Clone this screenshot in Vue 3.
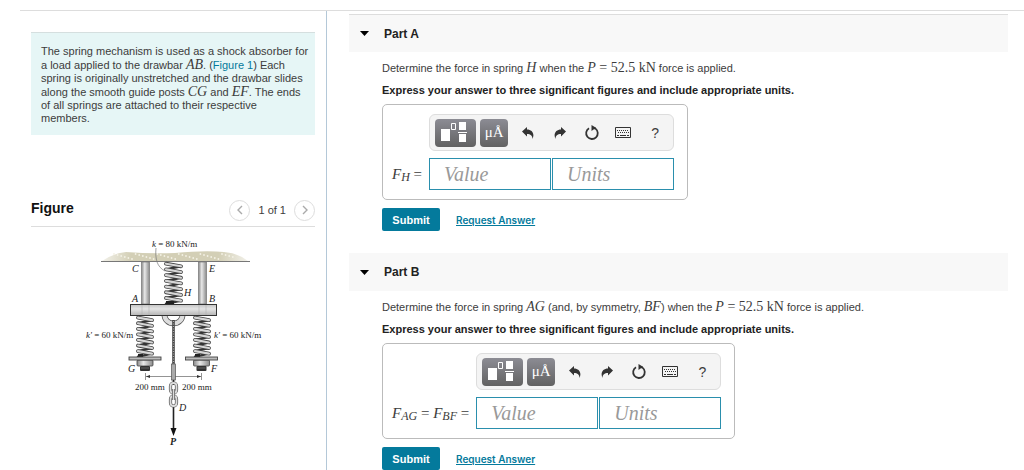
<script setup>
import { ref } from "vue";

// Text pieces of each question, "m" is a math variable and "n" a math number
const parts = ref([
  {
    id: "a",
    title: "Part A",
    open: true,
    text: [
      { text: "Determine the force in spring " },
      { kind: "m", text: "H" },
      { text: " when the " },
      { kind: "m", text: "P" },
      { kind: "n", text: " = 52.5 kN" },
      { text: " force is applied." },
    ],
    forces: ["H"],
  },
  {
    id: "b",
    title: "Part B",
    open: true,
    text: [
      { text: "Determine the force in spring " },
      { kind: "m", text: "AG" },
      { text: " (and, by symmetry, " },
      { kind: "m", text: "BF" },
      { text: ") when the " },
      { kind: "m", text: "P" },
      { kind: "n", text: " = 52.5 kN" },
      { text: " force is applied." },
    ],
    forces: ["AG", "BF"],
  },
]);

// Build the front and back strands of a spring
const makeSpring = (left, right, top, bottom, coils) => {
  const step = (bottom - top) / coils;
  let front = "";
  let back = "";
  for (let i = 0; i < coils; i++) {
    const y = top + i * step;
    front += `M${left} ${y + step * 0.3}L${right} ${y + step * 0.75}`;
    back += `M${right} ${y + step * 0.75}L${left} ${y + step * 1.3}`;
  }
  return { front, back };
};

const springs = [
  makeSpring(86, 101, 27, 67, 7),
  makeSpring(58, 72, 81, 120, 7),
  makeSpring(115, 129, 81, 120, 7),
];

// Small stones in the ceiling
const stones = Array.from({ length: 34 }, (_, i) => ({
  x: 34 + i * 3.6,
  y: 19 + ((i * 7) % 6),
}));
</script>

<template>
  <div class="page">
    <aside class="sidebar">
      <p class="problem">
        The spring mechanism is used as a shock absorber for a load applied to
        the drawbar <i class="math">AB</i>. (<a href="#figure">Figure 1</a>)
        Each spring is originally unstretched and the drawbar slides along the
        smooth guide posts <i class="math">CG</i> and
        <i class="math">EF</i>. The ends of all springs are attached to their
        respective <br />members.
      </p>

      <div class="figure-header">
        <h2>Figure</h2>
        <div class="pager">
          <button type="button" aria-label="Previous figure">
            <svg width="8" height="10" viewBox="0 0 8 10"><path d="M6 1L2 5l4 4" /></svg>
          </button>
          <span>1 of 1</span>
          <button type="button" aria-label="Next figure">
            <svg width="8" height="10" viewBox="0 0 8 10"><path d="M2 1l4 4-4 4" /></svg>
          </button>
        </div>
      </div>

      <svg id="figure" class="figure" width="190" height="215" viewBox="0 0 190 215">
        <defs>
          <linearGradient id="post">
            <stop offset="0" stop-color="#888" />
            <stop offset="0.4" stop-color="#e8e8e8" />
            <stop offset="1" stop-color="#8a8a8a" />
          </linearGradient>
          <linearGradient id="bar" x2="0" y2="1">
            <stop offset="0" stop-color="#c4c4c4" />
            <stop offset="0.4" stop-color="#e4e4e4" />
            <stop offset="1" stop-color="#b4b4b4" />
          </linearGradient>
          <linearGradient id="ceiling">
            <stop offset="0" stop-color="#d3cfb6" stop-opacity="0.3" />
            <stop offset="0.2" stop-color="#d3cfb6" />
            <stop offset="0.8" stop-color="#d3cfb6" />
            <stop offset="1" stop-color="#d3cfb6" stop-opacity="0.3" />
          </linearGradient>
        </defs>

        <!-- ceiling -->
        <path d="M22 26Q34 18 46 17Q70 19 95 18Q125 15 144 17Q158 18 168 26Z" fill="url(#ceiling)" />
        <circle v-for="s in stones" :key="s.x" :cx="s.x" :cy="s.y" r="0.9" fill="#f3f1e4" />
        <path d="M21 26.5H170" stroke="#777" />

        <!-- guide posts -->
        <rect x="61.5" y="27" width="8" height="42" fill="url(#post)" stroke="#777" stroke-width="0.7" />
        <rect x="118.5" y="27" width="8" height="42" fill="url(#post)" stroke="#777" stroke-width="0.7" />

        <!-- springs -->
        <g v-for="(spring, i) in springs" :key="i" stroke-linecap="round" fill="none">
          <path :d="spring.back" stroke="#333" stroke-width="2.4" />
          <path :d="spring.front" stroke="#444" stroke-width="3.8" />
          <path :d="spring.front" stroke="#d6d6d6" stroke-width="2.2" />
        </g>
        <path d="M86 67.5h8M58 120.500h5M115 120.500h5" stroke="#222" stroke-width="3" />

        <!-- eye and drawbar -->
        <path d="M84.5 80a9 8.5 0 0 0 18 0" fill="none" stroke="#555" stroke-width="5.8" />
        <path d="M84.5 80a9 8.5 0 0 0 18 0" fill="none" stroke="#ddd" stroke-width="4.2" />
        <rect x="50.5" y="69.5" width="86" height="11" fill="url(#bar)" stroke="#333" />
        <path d="M62 70v10M69 70v10M119 70v10M126 70v10" stroke="#aaa" stroke-width="0.5" />

        <!-- plates and nuts -->
        <g v-for="x in [65, 121.5]" :key="x">
          <rect :x="x - 8" y="125" width="16" height="6" rx="1" fill="url(#post)" stroke="#444" stroke-width="0.8" />
          <rect :x="x - 5" y="131" width="10" height="5" rx="1" fill="#333" />
          <path :d="`M${x - 4} 133h8`" stroke="#888" stroke-width="0.6" />
          <rect :x="x - 16" y="122" width="32" height="3" fill="#bbb" stroke="#444" stroke-width="0.9" />
        </g>

        <!-- dimension line -->
        <path d="M65.5 138v7M121.5 138v7M66 141.5H121" stroke="#666" stroke-width="0.7" />
        <path d="M66 141.5l4-1.5v3zM121 141.5l-4-1.5v3z" fill="#333" />

        <!-- rope and chain -->
        <path d="M93.5 85V130" stroke="#444" stroke-width="2.6" />
        <path d="M93.5 86V130" stroke="#aaa" stroke-width="1.2" stroke-dasharray="1 1.5" />
        <rect x="91.5" y="129" width="4" height="16" fill="#aaa" stroke="#555" stroke-width="0.7" />
        <path d="M93.5 145v5M93.5 171v23" stroke="#222" stroke-width="1.6" />
        <g fill="none">
          <g stroke="#555" stroke-width="3.2">
            <rect x="90.5" y="148" width="6" height="10" rx="3" />
            <rect x="90.5" y="161" width="6" height="10" rx="3" />
          </g>
          <g stroke="#ddd" stroke-width="1.8">
            <rect x="90.5" y="148" width="6" height="10" rx="3" />
            <rect x="90.5" y="161" width="6" height="10" rx="3" />
          </g>
          <path d="M93.5 154v11" stroke="#555" stroke-width="3" />
          <path d="M93.5 154v11" stroke="#ddd" stroke-width="1.6" />
        </g>
        <path d="M93.5 201l-3-8h6z" fill="#111" />

        <!-- labels -->
        <path d="M76 13C75 24 77 32 85 36" fill="none" stroke="#777" stroke-width="0.7" />
        <g class="labels">
          <text x="72" y="12"><tspan class="it">k</tspan> = 80 kN/m</text>
          <text x="6" y="103"><tspan class="it">k'</tspan> = 60 kN/m</text>
          <text x="134" y="103"><tspan class="it">k'</tspan> = 60 kN/m</text>
          <text x="55" y="155">200 mm</text>
          <text x="102" y="155">200 mm</text>
        </g>
        <g class="points">
          <text x="52" y="37">C</text>
          <text x="129" y="37">E</text>
          <text x="52" y="67">A</text>
          <text x="129" y="67">B</text>
          <text x="104" y="61">H</text>
          <text x="48" y="137">G</text>
          <text x="131" y="137">F</text>
          <text x="99" y="176">D</text>
          <text x="90" y="210" class="bold">P</text>
        </g>
      </svg>
    </aside>

    <main class="content">
      <section v-for="part in parts" :key="part.id" class="part">
        <h2 class="part-header">
          <button type="button" :aria-expanded="part.open" @click="part.open = !part.open">
            <svg width="9" height="5" viewBox="0 0 9 5"><path d="M0 0h9L4.5 5z" /></svg>
            {{ part.title }}
          </button>
        </h2>

        <div v-if="part.open" class="part-body">
          <p>
            <span v-for="(piece, i) in part.text" :key="i" :class="piece.kind && ['math', piece.kind]">{{ piece.text }}</span>
          </p>
          <p class="hint">
            Express your answer to three significant figures and include
            appropriate units.
          </p>

          <div class="answer">
            <div class="toolbar">
              <button type="button" class="dark template" aria-label="Templates">
                <svg width="41" height="28" viewBox="0 0 41 28" fill="#fff">
                  <path d="M6 10h9v12H6zM24 3h7v8h-7zM23 13h9v1h-9zM24 15h7v8h-7z" />
                  <path d="M16.5 4.5h4v6h-4z" fill="none" stroke="#fff" />
                </svg>
              </button>
              <button type="button" class="dark symbols" aria-label="Symbols">μÅ</button>
              <div class="tools">
                <button type="button" aria-label="Undo">
                  <svg width="12" height="12" viewBox="0 0 12 12" fill="#333">
                    <path d="M0 4.5L5 0v2.5C10 2.5 13 6.5 10.5 12C10.5 8.5 8.5 7 5 7V9.5z" />
                  </svg>
                </button>
                <button type="button" aria-label="Redo">
                  <svg width="12" height="12" viewBox="0 0 12 12" fill="#333">
                    <path d="M12 4.5L7 0v2.5C2 2.5-1 6.5 1.5 12C1.5 8.5 3.5 7 7 7V9.5z" />
                  </svg>
                </button>
                <button type="button" aria-label="Reset">
                  <svg width="16" height="16" viewBox="0 0 16 16">
                    <path d="M5 3.2A5.8 5.8 0 1 0 11.500 3.600L9 2.800" fill="none" stroke="#333" stroke-width="1.8" />
                    <path d="M7.500 0l4.500 2.800L7.500 6z" fill="#333" />
                  </svg>
                </button>
                <button type="button" aria-label="Keyboard">
                  <svg width="16" height="11" viewBox="0 0 16 11" fill="none" stroke="#333">
                    <path d="M0.5 0.5h15v10h-15z" />
                    <path d="M2 3.5h12M3 5.5h11" stroke-dasharray="1 1" />
                    <path d="M2 8.5h2M5 8.5h6M12 8.5h2" />
                  </svg>
                </button>
                <button type="button" class="help" aria-label="Help">?</button>
              </div>
            </div>
            <label :for="`value-${part.id}`" class="force">
              <span v-for="force in part.forces" :key="force"><i>F<sub>{{ force }}</sub></i> = </span>
            </label>
            <div class="fields">
              <input :id="`value-${part.id}`" type="text" placeholder="Value" />
              <input type="text" placeholder="Units" aria-label="Units" />
            </div>
          </div>

          <div class="actions">
            <button type="button" class="submit">Submit</button>
            <a href="#">Request Answer</a>
          </div>
        </div>
      </section>
    </main>
  </div>
</template>

<style>
body {
  background: #fff;
}
</style>

<style scoped>
.page {
  box-sizing: border-box;
  display: flex;
  min-height: calc(100vh - 10px);
  margin-top: 10px;
  margin-left: 20px;
  border-top: 1px solid #ddd;
  color: #3c3c3c;
  font-family: "Liberation Sans", Arial, sans-serif;
  font-size: 11px;
}

h2,
p {
  margin: 0;
}

button {
  padding: 0;
  border: 0;
  background: none;
  color: inherit;
  font-family: inherit;
  cursor: pointer;
}

a {
  color: #047a9c;
}

.sidebar {
  box-sizing: border-box;
  flex: 0 0 307px;
  padding: 21px 11px 0 11px;
  border-right: 1px solid #b4c8d8;
}

.problem {
  padding: 12px 4px 10px 10px;
  border-top: 1px solid #d5dfdf;
  background: #e6f6f6;
  line-height: 13px;
}

.problem a {
  text-decoration: none;
}

.math {
  font-family: "Liberation Serif", "Times New Roman", serif;
  font-size: 14px;
  line-height: 1;
}

.m {
  font-style: italic;
}

.n {
  white-space: pre;
}

.figure-header {
  display: flex;
  justify-content: space-between;
  align-items: center;
  height: 32px;
  margin-top: 59px;
  border-bottom: 1px solid #ddd;
}

.figure-header h2 {
  padding-bottom: 4px;
  color: #111;
  font-size: 14px;
}

.pager {
  display: flex;
  align-items: center;
  gap: 8px;
}

.pager button {
  display: flex;
  align-items: center;
  justify-content: center;
  width: 21px;
  height: 21px;
  border: 1px solid #ddd;
  border-radius: 50%;
}

.pager path {
  fill: none;
  stroke: #aaa;
  stroke-width: 1.4;
}

.figure {
  display: block;
  margin: 8px auto 0 49px;
}

.labels,
.points {
  fill: #222;
  font-family: "Liberation Serif", "Times New Roman", serif;
  font-size: 9px;
}

.points,
.it {
  font-style: italic;
}

.points {
  font-size: 10px;
}

.bold {
  font-weight: bold;
}

.content {
  flex: 1;
  padding: 3px 16px 0 22px;
}

.part + .part {
  margin-top: 22px;
}

.part-header {
  box-sizing: border-box;
  display: flex;
  align-items: center;
  height: 38px;
  background: #f8f8f8;
}

.part:first-child .part-header {
  border-top: 1px solid #ddd;
}

.part-header button {
  display: flex;
  align-items: center;
  gap: 15px;
  margin-left: 11px;
  color: #222;
  font-size: 12px;
  font-weight: bold;
}

.part-body {
  padding: 6px 0 0 33px;
}

.part-body p {
  line-height: 20px;
}

.part-body .hint {
  margin-top: 2px;
  color: #222;
  font-weight: bold;
}

.answer {
  display: inline-grid;
  grid-template-columns: auto 245px;
  gap: 7px;
  margin-top: 4px;
  padding: 9px 13px 9px 9px;
  border: 1px solid #bbb;
  border-radius: 5px;
  vertical-align: top;
}

.toolbar {
  box-sizing: border-box;
  grid-column: 2;
  display: flex;
  align-items: center;
  gap: 4px;
  height: 37px;
  padding: 0 2px 0 5px;
  border: 1px solid #ddd;
  border-radius: 6px;
  background: #f4f4f4;
}

.dark {
  height: 28px;
  border-radius: 4px;
  background: linear-gradient(#8c8c94, #626262);
  color: #fff;
}

.template {
  display: flex;
  width: 41px;
}

.symbols {
  width: 28px;
  font-family: "Liberation Serif", "Times New Roman", serif;
  font-size: 15px;
}

.tools {
  flex: 1;
  display: flex;
}

.tools button {
  display: flex;
  flex: 1;
  align-items: center;
  justify-content: center;
  height: 28px;
}

.tools .help {
  font-size: 14px;
}

.force {
  align-self: center;
  font-family: "Liberation Serif", "Times New Roman", serif;
  font-size: 15px;
}

.force sub {
  font-size: 12px;
  line-height: 1;
  vertical-align: -2px;
}

.fields {
  display: flex;
  gap: 1px;
}

.fields input {
  box-sizing: border-box;
  flex: 1;
  min-width: 0;
  height: 32px;
  padding: 0 14px;
  border: 1px solid #2a8fad;
  font-family: "Liberation Serif", "Times New Roman", serif;
  font-size: 20px;
}

.fields input::placeholder {
  color: #999;
  font-style: italic;
}

.actions {
  display: flex;
  align-items: center;
  gap: 16px;
  margin-top: 8px;
}

.submit {
  width: 58px;
  height: 23px;
  border-radius: 2px;
  background: #047a9c;
  color: #fff;
  font-size: 11px;
  font-weight: bold;
}

.actions a {
  font-family: Inter, sans-serif;
  font-size: 10px;
  font-weight: 600;
}
</style>
